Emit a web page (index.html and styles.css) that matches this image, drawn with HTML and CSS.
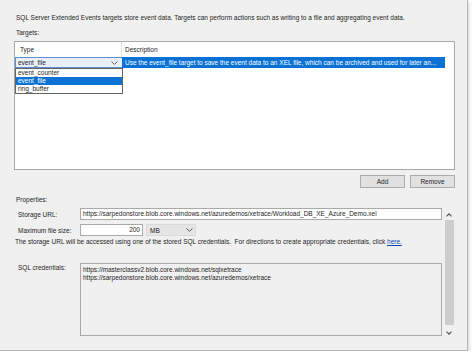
FILE: index.html
```html
<!DOCTYPE html>
<html lang="en">
<head>
    <meta charset="UTF-8">
    <title>Target Properties</title>
    <link rel="stylesheet" href="styles.css">
</head>
<body>
    <div class="dialog">
        <p class="intro">SQL Server Extended Events targets store event data. Targets can perform actions such as writing to a file and aggregating event data.</p>
        <p class="caption">Targets:</p>

        <div class="grid">
            <div class="grid-head">
                <div class="col-type">Type</div>
                <div class="col-desc">Description</div>
            </div>
            <div class="grid-row">
                <div class="col-type">
                    <div class="combo combo-open">
                        <span>event_file</span>
                        <svg class="chevron" width="7" height="4" viewBox="0 0 7 4"><polyline points="0.5,0.5 3.5,3.3 6.5,0.5" /></svg>
                    </div>
                </div>
                <div class="col-desc selected">Use the event_file target to save the event data to an XEL file, which can be archived and used for later an...</div>
            </div>
            <ul class="dropdown">
                <li>event_counter</li>
                <li class="current">event_file</li>
                <li>ring_buffer</li>
            </ul>
        </div>

        <div class="actions">
            <button class="btn">Add</button>
            <button class="btn">Remove</button>
        </div>

        <p class="caption caption-props">Properties:</p>
        <div class="props">
            <div class="props-body">
                <div class="field">
                    <label class="field-label">Storage URL:</label>
                    <div class="textbox textbox-wide">https://sarpedonstore.blob.core.windows.net/azuredemos/xetrace/Workload_DB_XE_Azure_Demo.xel</div>
                </div>
                <div class="field">
                    <label class="field-label">Maximum file size:</label>
                    <div class="textbox textbox-num">200</div>
                    <div class="combo combo-unit">
                        <span>MB</span>
                        <svg class="chevron" width="7" height="4" viewBox="0 0 7 4"><polyline points="0.5,0.5 3.5,3.3 6.5,0.5" /></svg>
                    </div>
                </div>
                <p class="note">The storage URL will be accessed using one of the stored SQL credentials.&nbsp; For directions to create appropriate credentials, click <a href="#" class="link">here.</a></p>
                <div class="field field-creds">
                    <label class="field-label">SQL credentials:</label>
                    <div class="listbox">
                        <div>https://masterclassv2.blob.core.windows.net/sqlxetrace</div>
                        <div>https://sarpedonstore.blob.core.windows.net/azuredemos/xetrace</div>
                    </div>
                </div>
            </div>
            <div class="scrollbar">
                <svg class="arrow" width="6" height="4" viewBox="0 0 6 4"><polyline points="0.5,3.3 3,0.8 5.5,3.3" /></svg>
                <div class="thumb"></div>
                <svg class="arrow" width="6" height="4" viewBox="0 0 6 4"><polyline points="0.5,0.7 3,3.2 5.5,0.7" /></svg>
            </div>
        </div>
    </div>
</body>
</html>
```

FILE: styles.css
```css
body {
    margin: 0;
    padding: 0;
    background: #fff;
    font-family: "Liberation Sans", Arial, sans-serif;
    font-size: 6.5px;
    color: #1e1e1e;
}

.dialog {
    width: 468px;
    height: 351px;
    box-sizing: border-box;
    padding: 14px 0 0 14px;
    background: #f0f0f0;
    border-right: 1px solid #b4b4b4;
    border-bottom: 1px solid #b4b4b4;
    box-shadow: 2px 2px 3px rgba(0, 0, 0, 0.12);
    display: flex;
    flex-direction: column;
}

.intro {
    margin: 0 0 0 2px;
    line-height: 8px;
}

.caption {
    margin: 7px 0 0 2px;
    line-height: 8px;
}

.grid {
    position: relative;
    width: 441px;
    height: 129px;
    box-sizing: border-box;
    margin-top: 4px;
    background: #fff;
    border: 1px solid #a8a8a8;
}

.grid-head,
.grid-row {
    display: flex;
}

.grid-head {
    height: 15px;
    line-height: 15px;
}

.grid-head .col-type {
    border-right: 1px solid #e3e3e3;
}

.col-type {
    width: 107px;
    box-sizing: border-box;
    padding-left: 5px;
}

.col-desc {
    flex: 1;
    padding-left: 3px;
}

.grid-row {
    height: 11px;
    line-height: 11px;
}

.grid-row .col-type {
    padding-left: 0;
}

.col-desc.selected {
    flex: 0 0 320px;
    background: #0a72d4;
    color: #fff;
}

.combo {
    display: flex;
    justify-content: space-between;
    align-items: center;
    box-sizing: border-box;
    background: #fff;
    border: 1px solid #7a7a7a;
}

.combo-open {
    height: 11px;
    width: 108px;
    padding: 0 2px;
    border-color: #5d8fcf;
    background: #e8eff9;
}

.chevron {
    margin-right: 2px;
    fill: none;
    stroke: #606060;
    stroke-width: 1;
}

.dropdown {
    position: absolute;
    left: 0;
    top: 26px;
    width: 108px;
    margin: 0;
    padding: 0;
    list-style: none;
    background: #fff;
    border: 1px solid #646464;
    box-sizing: border-box;
    z-index: 2;
}

.dropdown li {
    height: 8px;
    line-height: 8px;
    padding-left: 2px;
}

.dropdown li.current {
    background: #0a72d4;
    color: #fff;
}

.actions {
    display: flex;
    justify-content: flex-end;
    gap: 5px;
    width: 441px;
    margin-top: 5px;
}

.btn {
    width: 45px;
    height: 13px;
    padding: 0;
    font: inherit;
    color: #1e1e1e;
    background: #e1e1e1;
    border: 1px solid #adadad;
}

.caption-props {
    margin-top: 8px;
}

.props {
    display: flex;
    width: 440px;
    height: 139px;
    margin-top: 1px;
}

.props-body {
    flex: 1;
    padding: 3px 0 0 4px;
}

.field {
    display: flex;
    align-items: center;
    height: 12px;
}

.field + .field {
    margin-top: 4px;
}

.field-label {
    width: 62px;
}

.textbox {
    height: 12px;
    line-height: 10px;
    box-sizing: border-box;
    padding: 0 2px;
    background: #fff;
    border: 1px solid #a9a9a9;
    white-space: nowrap;
    overflow: hidden;
}

.textbox-wide {
    width: 362px;
}

.textbox-num {
    width: 63px;
    text-align: right;
}

.combo-unit {
    width: 50px;
    height: 12px;
    margin-left: 3px;
    padding-left: 3px;
    background: #e5e5e5;
    border-color: #dadada;
}

.note {
    margin: 2px 0 0 -3px;
    line-height: 8px;
}

.link {
    color: #0645ad;
}

.field.field-creds {
    align-items: flex-start;
    height: 73px;
    margin-top: 17px;
}

.field-creds .field-label {
    padding-top: 1px;
}

.listbox {
    width: 362px;
    height: 73px;
    box-sizing: border-box;
    padding: 2px 2px;
    line-height: 8px;
    background: #f0f0f0;
    border: 1px solid #a9a9a9;
}

.scrollbar {
    width: 10px;
    display: flex;
    flex-direction: column;
    align-items: center;
    padding-top: 8px;
}

.arrow {
    fill: none;
    stroke: #555;
    stroke-width: 1.2;
}

.thumb {
    width: 9px;
    height: 105px;
    background: #cdcdcd;
    margin: 3px 0 6px;
}
```
